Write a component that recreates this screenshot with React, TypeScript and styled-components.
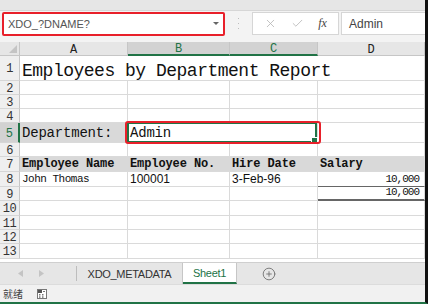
import React from 'react';
import styled, { createGlobalStyle } from 'styled-components';
import { X, Check, CirclePlus } from 'lucide-react';

const GlobalStyle = createGlobalStyle`
  html, body {
    margin: 0;
    padding: 0;
    background: #ffffff;
  }
  body {
    width: 428px;
    height: 304px;
    overflow: hidden;
    font-family: "Liberation Sans", Arial, sans-serif;
  }
  * {
    box-sizing: border-box;
  }
`;

const GREEN = '#217346';
const GRID = '#dadada';
const MONO = '"Liberation Mono", "Courier New", monospace';
const SANS = '"Liberation Sans", Arial, sans-serif';

const ROW_HEIGHTS = [25, 14, 14, 14, 20, 14, 15, 15, 14, 15, 14, 14, 15];

const Frame = styled.div`
  width: 428px;
  height: 304px;
  display: flex;
  flex-direction: column;
  border-right: 3px solid #111;
  border-bottom: 2px solid ${GREEN};
  background: #f3f3f3;
  overflow: hidden;
`;

const TopStrip = styled.div`
  height: 11px;
  flex: none;
  background: #e6e6e6;
  border-bottom: 1px solid #d6d6d6;
`;

const FormulaBar = styled.div`
  height: 25px;
  flex: none;
  display: flex;
  align-items: center;
  padding-left: 2px;
  background: #f3f3f3;
`;

const NameBox = styled.div`
  width: 223px;
  height: 24px;
  display: flex;
  align-items: center;
  justify-content: space-between;
  padding: 0 4px 0 4px;
  background: #ffffff;
  border: 2px solid #e8202a;
  border-radius: 2px;
  font-family: ${SANS};
  font-size: 11px;
  color: #555;
`;

const DropArrow = styled.span`
  width: 0;
  height: 0;
  border-left: 3px solid transparent;
  border-right: 3px solid transparent;
  border-top: 3px solid #666;
`;

const Dots = styled.span`
  width: 27px;
  display: flex;
  justify-content: center;
`;

const ButtonBox = styled.div`
  width: 87px;
  height: 23px;
  display: flex;
  align-items: center;
  justify-content: space-around;
  padding: 0 4px;
  background: #ffffff;
  border: 1px solid #d6d6d6;
`;

const Fx = styled.span`
  font-family: "Liberation Serif", "Times New Roman", serif;
  font-style: italic;
  font-size: 12px;
  color: #444;
`;

const ValueBox = styled.div`
  flex: 1;
  height: 23px;
  margin-left: 2px;
  display: flex;
  align-items: center;
  padding-left: 7px;
  background: #ffffff;
  border: 1px solid #d6d6d6;
  border-right: none;
  font-family: ${SANS};
  font-size: 12px;
  color: #444;
`;

const Sheet = styled.div`
  margin-top: 6px;
  height: 220px;
  flex: none;
  display: grid;
  grid-template-columns: 20px 108px 102px 88px 107px;
  grid-template-rows: 14px ${ROW_HEIGHTS.map((h) => `${h}px`).join(' ')};
  align-content: start;
  background: #ffffff;
  overflow: hidden;
`;

const Corner = styled.div`
  position: relative;
  background: #e6e6e6;
  border-right: 1px solid #c6c6c6;
  border-bottom: 1px solid #c6c6c6;

  &::after {
    content: '';
    position: absolute;
    right: 2px;
    bottom: 2px;
    width: 0;
    height: 0;
    border-left: 8px solid transparent;
    border-bottom: 8px solid #c4c4c4;
  }
`;

const ColHead = styled.div<{ $selected?: boolean }>`
  display: flex;
  align-items: center;
  justify-content: center;
  padding-top: 2px;
  background: ${(p) => (p.$selected ? '#d2d2d2' : '#e6e6e6')};
  border-right: 1px solid #c6c6c6;
  border-bottom: ${(p) => (p.$selected ? `2px solid ${GREEN}` : '1px solid #c6c6c6')};
  font-family: ${MONO};
  font-size: 12px;
  color: ${(p) => (p.$selected ? GREEN : '#222')};
`;

const RowHead = styled.div<{ $selected?: boolean }>`
  display: flex;
  align-items: center;
  justify-content: center;
  padding-top: 2px;
  background: ${(p) => (p.$selected ? '#d2d2d2' : '#efefef')};
  border-right: ${(p) => (p.$selected ? `2px solid ${GREEN}` : '1px solid #c6c6c6')};
  border-bottom: 1px solid #d6d6d6;
  font-family: ${MONO};
  font-size: 12px;
  line-height: 12px;
  letter-spacing: -0.5px;
  color: ${(p) => (p.$selected ? GREEN : '#333')};
`;

const Cell = styled.div<{ $span?: number; $fill?: string; $right?: boolean }>`
  grid-column: span ${(p) => p.$span ?? 1};
  position: relative;
  display: flex;
  align-items: flex-end;
  justify-content: ${(p) => (p.$right ? 'flex-end' : 'flex-start')};
  padding: 0 3px 0 2px;
  background: ${(p) => p.$fill ?? '#ffffff'};
  border-right: 1px solid ${(p) => p.$fill ?? GRID};
  border-bottom: 1px solid ${GRID};
  white-space: nowrap;
  color: #111;
`;

const TotalCell = styled(Cell)<{ $double?: boolean }>`
  padding-right: 5px;
  border-bottom: ${(p) => (p.$double ? '2px solid #666' : '1px solid #666')};
`;

const Title = styled.span`
  font-family: ${MONO};
  font-size: 18px;
  line-height: 18px;
  letter-spacing: -0.5px;
  color: #111;
`;

const Label = styled.span`
  font-family: ${MONO};
  font-size: 14px;
  line-height: 16px;
  letter-spacing: -0.2px;
  padding-bottom: 1px;
  color: #111;
`;

const HeadText = styled.span`
  font-family: ${MONO};
  font-weight: bold;
  font-size: 12px;
  line-height: 13px;
  letter-spacing: -0.1px;
  color: #111;
`;

const MonoText = styled.span`
  font-family: ${MONO};
  font-size: 11px;
  line-height: 13px;
  letter-spacing: -0.5px;
  color: #111;
`;

const Amount = styled.span`
  font-family: ${MONO};
  font-size: 11px;
  line-height: 13px;
  letter-spacing: -1px;
  color: #111;
`;

const SansText = styled.span`
  font-family: ${SANS};
  font-size: 12px;
  line-height: 13px;
  color: #111;
`;

const Selection = styled.div`
  position: absolute;
  z-index: 1;
  inset: -1px 0 -1px -1px;
  border: 2px solid ${GREEN};
  pointer-events: none;

  &::after {
    content: '';
    position: absolute;
    right: -3px;
    bottom: -3px;
    width: 5px;
    height: 5px;
    background: ${GREEN};
    border: 1px solid #fff;
  }
`;

const Highlight = styled.div`
  position: absolute;
  z-index: 2;
  inset: -2px -4px -2px -3px;
  border: 2px solid #e8202a;
  border-radius: 3px;
  pointer-events: none;
`;

const TabBar = styled.div`
  height: 22px;
  flex: none;
  display: flex;
  align-items: stretch;
  background: #e6e6e6;
  border-top: 1px solid #cfcfcf;
`;

const TabNav = styled.div`
  width: 77px;
  display: flex;
  align-items: center;
  gap: 16px;
  padding-left: 18px;
  border-right: 1px solid #bdbdbd;
  margin: 3px 0;
`;

const Tab = styled.div<{ $active?: boolean }>`
  width: ${(p) => (p.$active ? '54px' : '106px')};
  display: flex;
  align-items: center;
  justify-content: center;
  background: ${(p) => (p.$active ? '#ffffff' : 'transparent')};
  border-right: 1px solid #c6c6c6;
  border-bottom: ${(p) => (p.$active ? `2px solid ${GREEN}` : 'none')};
  font-family: ${SANS};
  font-size: 11px;
  letter-spacing: -0.3px;
  color: ${(p) => (p.$active ? GREEN : '#333')};
`;

const AddSheet = styled.div`
  width: 64px;
  display: flex;
  align-items: center;
  justify-content: center;
  color: #6f6f6f;
`;

const StatusBar = styled.div`
  flex: 1;
  display: flex;
  align-items: center;
  gap: 14px;
  padding-left: 3px;
  background: #f1f1f1;
  border-top: 1px solid #dcdcdc;
  font-family: "Noto Sans CJK SC", sans-serif;
  font-size: 10px;
  color: #444;
`;

const NavArrow = ({ dir }: { dir: 'left' | 'right' }) => (
  <svg width="5" height="7" viewBox="0 0 5 7">
    <polygon points={dir === 'left' ? '5,0 0,3.5 5,7' : '0,0 5,3.5 0,7'} fill="#c4c4c4" />
  </svg>
);

const MacroIcon = () => (
  <svg width="10" height="10" viewBox="0 0 10 10">
    <rect x="0.5" y="0.5" width="9" height="9" fill="#fff" stroke="#777" />
    <rect x="1" y="1" width="4" height="3" fill="#555" />
    <rect x="6" y="2" width="2" height="1" fill="#777" />
    <rect x="2" y="5" width="1.5" height="1.5" fill="#777" />
    <rect x="5" y="5" width="1.5" height="1.5" fill="#777" />
    <rect x="2" y="7.3" width="1.5" height="1.5" fill="#777" />
    <rect x="5" y="7.3" width="1.5" height="1.5" fill="#777" />
  </svg>
);

const DotsIcon = () => (
  <svg width="3" height="11" viewBox="0 0 3 11">
    <rect x="1" y="0" width="1" height="1" fill="#bdbdbd" />
    <rect x="1" y="5" width="1" height="1" fill="#bdbdbd" />
    <rect x="1" y="10" width="1" height="1" fill="#bdbdbd" />
  </svg>
);

const App = () => {
  const emptyRows = [10, 11, 12, 13];

  return (
    <>
      <GlobalStyle />
      <Frame>
        <TopStrip />
        <FormulaBar>
          <NameBox>
            <span>XDO_?DNAME?</span>
            <DropArrow />
          </NameBox>
          <Dots>
            <DotsIcon />
          </Dots>
          <ButtonBox>
            <X size={13} color="#b5b5b5" strokeWidth={1.5} />
            <Check size={13} color="#b5b5b5" strokeWidth={1.5} />
            <Fx>fx</Fx>
          </ButtonBox>
          <ValueBox>Admin</ValueBox>
        </FormulaBar>

        <Sheet>
          <Corner />
          <ColHead>A</ColHead>
          <ColHead $selected>B</ColHead>
          <ColHead $selected>C</ColHead>
          <ColHead>D</ColHead>

          <RowHead>1</RowHead>
          <Cell $span={4}>
            <Title>Employees by Department Report</Title>
          </Cell>

          {[2, 3, 4].map((r) => (
            <React.Fragment key={r}>
              <RowHead>{r}</RowHead>
              <Cell />
              <Cell />
              <Cell />
              <Cell />
            </React.Fragment>
          ))}

          <RowHead $selected>5</RowHead>
          <Cell $fill="#d9d9d9">
            <Label>Department:</Label>
          </Cell>
          <Cell $span={2}>
            <Label>Admin</Label>
            <Selection />
            <Highlight />
          </Cell>
          <Cell />

          <RowHead>6</RowHead>
          <Cell />
          <Cell />
          <Cell />
          <Cell />

          <RowHead>7</RowHead>
          <Cell $fill="#d9d9d9">
            <HeadText>Employee Name</HeadText>
          </Cell>
          <Cell $fill="#d9d9d9">
            <HeadText>Employee No.</HeadText>
          </Cell>
          <Cell $fill="#d9d9d9">
            <HeadText>Hire Date</HeadText>
          </Cell>
          <Cell $fill="#d9d9d9">
            <HeadText>Salary</HeadText>
          </Cell>

          <RowHead>8</RowHead>
          <Cell>
            <MonoText>John Thomas</MonoText>
          </Cell>
          <Cell>
            <SansText>100001</SansText>
          </Cell>
          <Cell>
            <SansText>3-Feb-96</SansText>
          </Cell>
          <TotalCell $right>
            <Amount>10,000</Amount>
          </TotalCell>

          <RowHead>9</RowHead>
          <Cell />
          <Cell />
          <Cell />
          <TotalCell $right $double>
            <Amount>10,000</Amount>
          </TotalCell>

          {emptyRows.map((r) => (
            <React.Fragment key={r}>
              <RowHead>{r}</RowHead>
              <Cell />
              <Cell />
              <Cell />
              <Cell />
            </React.Fragment>
          ))}
        </Sheet>

        <TabBar>
          <TabNav>
            <NavArrow dir="left" />
            <NavArrow dir="right" />
          </TabNav>
          <Tab>XDO_METADATA</Tab>
          <Tab $active>Sheet1</Tab>
          <AddSheet>
            <CirclePlus size={14} strokeWidth={1.5} />
          </AddSheet>
        </TabBar>

        <StatusBar>
          <span>就绪</span>
          <MacroIcon />
        </StatusBar>
      </Frame>
    </>
  );
};

export default App;
